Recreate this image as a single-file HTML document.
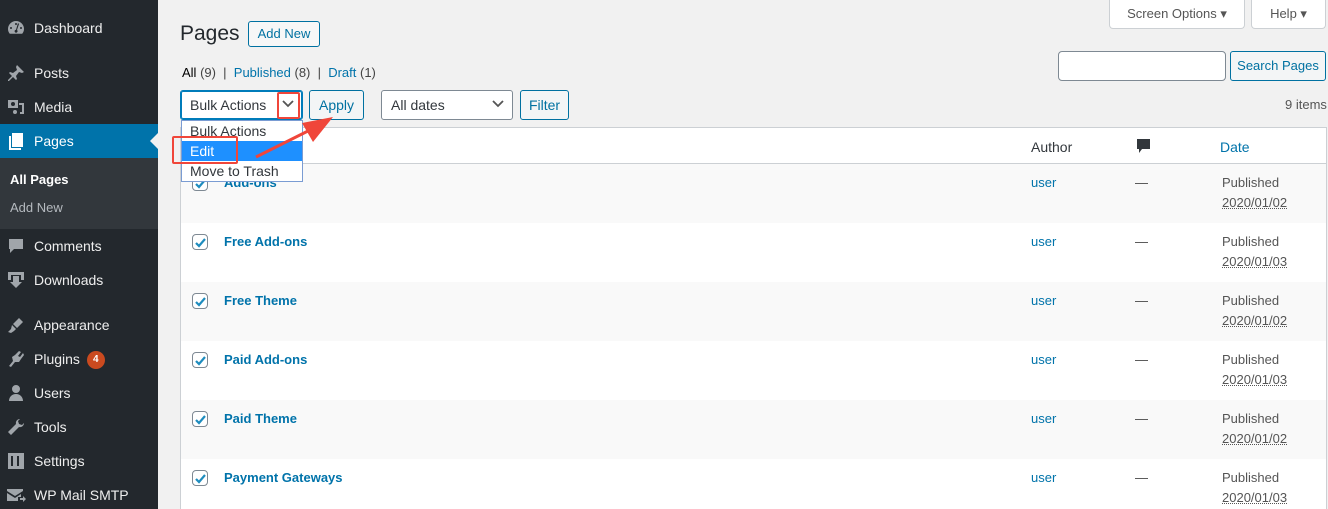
<!DOCTYPE html>
<html><head><meta charset="utf-8">
<style>
*{box-sizing:border-box;margin:0;padding:0}
html,body{width:1328px;height:509px;overflow:hidden}
body{background:#f1f1f1;font-family:"Liberation Sans",sans-serif;font-size:13px;color:#444;position:relative}
.abs{position:absolute}
#side{left:0;top:0;width:158px;height:509px;background:#23282d}
.mi{position:absolute;left:0;width:158px;height:34px;color:#eee;font-size:14px;line-height:34px;padding-left:34px}
.ic{position:absolute;left:6px;top:7px;width:20px;height:20px;fill:#a0a5aa}
.link{color:#0073aa}
.btn{position:absolute;border:1px solid #0071a1;border-radius:3px;background:#f3f5f6;color:#0071a1;font-size:13px;text-align:center}
.row{position:absolute;left:181px;width:1145px;height:59px}
.cb{position:absolute;left:11px;top:11px;width:16px;height:16px;border:1px solid #7e8993;border-radius:4px;background:#fff}
.cb svg{position:absolute;left:1px;top:1px}
.title{position:absolute;left:43px;top:11px;color:#0073aa;font-weight:bold;font-size:13px}
.au{position:absolute;left:850px;top:11px;color:#0073aa}
.dash{position:absolute;left:954px;top:11px}
.dt{position:absolute;left:1041px;top:9px;line-height:20px;color:#555}
.dt u{text-decoration:underline dotted;text-decoration-thickness:1px}
</style></head><body>
<div id="side" class="abs">
 <div class="mi" style="top:11px"><svg class="ic" viewBox="0 0 20 20"><path d="M10 3a8 8 0 0 0-8 8c0 2 .7 3.5 1.8 4.8h12.4A8 8 0 0 0 18 11a8 8 0 0 0-8-8zm0 2a1 1 0 1 1 0 2 1 1 0 0 1 0-2zM5 9a1 1 0 1 1 0 2 1 1 0 0 1 0-2zm10 0a1 1 0 1 1 0 2 1 1 0 0 1 0-2zm-2-3l-2 6a1.5 1.5 0 1 1-1-.3L12 5z"/></svg>Dashboard</div>
 <div class="mi" style="top:56px"><svg class="ic" viewBox="0 0 20 20"><path d="M11 2l7 7-2 1-3-1-3 4 1 3-1 1-3-3-4 4-1 0 0-1 4-4-3-3 1-1 3 1 4-3-1-3z"/></svg>Posts</div>
 <div class="mi" style="top:90px"><svg class="ic" viewBox="0 0 20 20"><path d="M2 3h10v8H2zM13 6h5v11h-4v-2h2V8h-3zM7 5a2 2 0 1 0 0 4 2 2 0 0 0 0-4zM9 13a2 2 0 1 0 0 4 2 2 0 0 0 0-4z"/></svg>Media</div>
 <div class="mi" style="top:124px;background:#0073aa;color:#fff"><svg class="ic" style="fill:#fff" viewBox="0 0 20 20"><path d="M6 2h11v14H6zM3 5h2v12h10v2H3z"/></svg>Pages</div>
 <div class="abs" style="left:150px;top:133px;width:0;height:0;border-top:8px solid transparent;border-bottom:8px solid transparent;border-right:8px solid #f1f1f1"></div>
 <div class="abs" style="left:0;top:158px;width:158px;height:71px;background:#32373c"></div>
 <div class="abs" style="left:10px;top:172px;color:#fff;font-weight:bold;font-size:13px">All Pages</div>
 <div class="abs" style="left:10px;top:200px;color:#b4b9be;font-size:13px">Add New</div>
 <div class="mi" style="top:229px"><svg class="ic" viewBox="0 0 20 20"><path d="M3 3h14v10H8l-4 4v-4H3z"/></svg>Comments</div>
 <div class="mi" style="top:263px"><svg class="ic" viewBox="0 0 20 20"><path d="M2 2h16v8h-3V5H5v5H2zM7 6h6v6h3l-6 6-6-6h3z"/></svg>Downloads</div>
 <div class="mi" style="top:308px"><svg class="ic" viewBox="0 0 20 20"><path d="M13 3l4 4-6 6-4-4zM6 10l4 4-2 2-3 2-3-1 3-3z"/></svg>Appearance</div>
 <div class="mi" style="top:342px"><svg class="ic" viewBox="0 0 20 20"><path d="M13 2l2 1-3 4 2 1 3-4 1 2-3 4-2 3-4 0-4 5-2-1 4-5-1-4 3-2z"/></svg>Plugins <span style="display:inline-block;width:18px;height:18px;border-radius:9px;background:#ca4a1f;color:#fff;font-size:10px;font-weight:bold;text-align:center;line-height:18px;vertical-align:middle;margin-left:3px">4</span></div>
 <div class="mi" style="top:376px"><svg class="ic" viewBox="0 0 20 20"><path d="M10 2a4 4 0 1 1 0 8 4 4 0 0 1 0-8zM3 18c0-4 3-7 7-7s7 3 7 7z"/></svg>Users</div>
 <div class="mi" style="top:410px"><svg class="ic" viewBox="0 0 20 20"><path d="M14 2a4 4 0 0 0-4 5l-8 8 3 3 8-8a4 4 0 0 0 5-4l-2 2-3-1-1-3z"/></svg>Tools</div>
 <div class="mi" style="top:444px"><svg class="ic" viewBox="0 0 20 20"><path d="M2 2h16v16H2zM5 5v10h2V5zm6 0v10h2V5z" fill-rule="evenodd"/></svg>Settings</div>
 <div class="mi" style="top:478px"><svg class="ic" viewBox="0 0 20 20"><path d="M1 4h16v2l-8 5-8-5zM1 8l8 5 6-4v3h-3v4H1z"/><path d="M14 13h3v-2l3 3-3 3v-2h-3z"/></svg>WP Mail SMTP</div>
</div>

<div class="abs" style="left:180px;top:22px;font-size:21px;color:#23282d">Pages</div>
<div class="btn" style="left:248px;top:21px;width:72px;height:26px;line-height:24px;background:#f7f7f7">Add New</div>
<div class="abs" style="left:182px;top:65px;font-size:13px"><span style="color:#000">All</span> (9) &nbsp;| &nbsp;<span class="link">Published</span> (8) &nbsp;| &nbsp;<span class="link">Draft</span> (1)</div>

<div class="abs" style="left:1109px;top:0;width:136px;height:29px;background:#fff;border:1px solid #ccd0d4;border-top:none;border-radius:0 0 4px 4px;color:#555;text-align:center;line-height:28px">Screen Options ▾</div>
<div class="abs" style="left:1251px;top:0;width:75px;height:29px;background:#fff;border:1px solid #ccd0d4;border-top:none;border-radius:0 0 4px 4px;color:#555;text-align:center;line-height:28px">Help ▾</div>
<div class="abs" style="left:1058px;top:51px;width:168px;height:30px;background:#fff;border:1px solid #7e8993;border-radius:4px"></div>
<div class="btn" style="left:1230px;top:51px;width:96px;height:30px;line-height:28px">Search Pages</div>
<div class="abs" style="left:1285px;top:97px;color:#555">9 items</div>

<div class="abs" style="left:180px;top:90px;width:123px;height:30px;background:#fff;border:1px solid #007cba;border-radius:3px;box-shadow:0 0 0 1px #007cba inset;padding-left:9px;line-height:28px;font-size:14px;color:#32373c">Bulk Actions</div>
<svg class="abs" style="left:281px;top:98px" width="14" height="12"><path d="M2 3l5 5 5-5" stroke="#555" stroke-width="1.8" fill="none"/></svg>
<div class="abs" style="left:277px;top:92px;width:23px;height:27px;border:2px solid #f0463a;border-radius:2px"></div>
<div class="btn" style="left:309px;top:90px;width:55px;height:30px;line-height:28px;font-size:14px">Apply</div>
<div class="abs" style="left:381px;top:90px;width:132px;height:30px;background:#fff;border:1px solid #7e8993;border-radius:3px;padding-left:9px;line-height:28px;font-size:14px;color:#32373c">All dates</div>
<svg class="abs" style="left:491px;top:98px" width="14" height="12"><path d="M2 3l5 5 5-5" stroke="#555" stroke-width="1.8" fill="none"/></svg>
<div class="btn" style="left:520px;top:90px;width:49px;height:30px;line-height:28px;font-size:14px">Filter</div>

<div class="abs" style="left:180px;top:127px;width:1147px;height:390px;background:#fff;border:1px solid #ccd0d4"></div>
<div class="abs" style="left:181px;top:163px;width:1145px;height:1px;background:#ccd0d4"></div>
<div class="abs" style="left:1031px;top:139px;font-size:14px;color:#32373c">Author</div>
<svg class="abs" style="left:1136px;top:138px" width="15" height="16"><path d="M1 1h13v10H6l-3 4v-4H1z" fill="#32373c"/></svg>
<div class="abs" style="left:1220px;top:139px;font-size:14px;color:#0073aa">Date</div>

<div class="row" style="top:164px;background:#f9f9f9"><div class="cb"><svg width="13" height="13"><path d="M2 7l3 3 6-7" stroke="#1e8cbe" stroke-width="2.2" fill="none"/></svg></div><div class="title">Add-ons</div><div class="au">user</div><div class="dash">—</div><div class="dt">Published<br><u>2020/01/02</u></div></div>
<div class="row" style="top:223px;background:#fff"><div class="cb"><svg width="13" height="13"><path d="M2 7l3 3 6-7" stroke="#1e8cbe" stroke-width="2.2" fill="none"/></svg></div><div class="title">Free Add-ons</div><div class="au">user</div><div class="dash">—</div><div class="dt">Published<br><u>2020/01/03</u></div></div>
<div class="row" style="top:282px;background:#f9f9f9"><div class="cb"><svg width="13" height="13"><path d="M2 7l3 3 6-7" stroke="#1e8cbe" stroke-width="2.2" fill="none"/></svg></div><div class="title">Free Theme</div><div class="au">user</div><div class="dash">—</div><div class="dt">Published<br><u>2020/01/02</u></div></div>
<div class="row" style="top:341px;background:#fff"><div class="cb"><svg width="13" height="13"><path d="M2 7l3 3 6-7" stroke="#1e8cbe" stroke-width="2.2" fill="none"/></svg></div><div class="title">Paid Add-ons</div><div class="au">user</div><div class="dash">—</div><div class="dt">Published<br><u>2020/01/03</u></div></div>
<div class="row" style="top:400px;background:#f9f9f9"><div class="cb"><svg width="13" height="13"><path d="M2 7l3 3 6-7" stroke="#1e8cbe" stroke-width="2.2" fill="none"/></svg></div><div class="title">Paid Theme</div><div class="au">user</div><div class="dash">—</div><div class="dt">Published<br><u>2020/01/02</u></div></div>
<div class="row" style="top:459px;background:#fff;height:50px;overflow:hidden"><div class="cb"><svg width="13" height="13"><path d="M2 7l3 3 6-7" stroke="#1e8cbe" stroke-width="2.2" fill="none"/></svg></div><div class="title">Payment Gateways</div><div class="au">user</div><div class="dash">—</div><div class="dt">Published<br><u>2020/01/03</u></div></div>

<div class="abs" style="left:181px;top:120px;width:122px;height:62px;background:#fff;border:1px solid #7a9cd3;font-size:14px;color:#32373c">
 <div style="height:20px;line-height:20px;padding-left:8px">Bulk Actions</div>
 <div style="height:20px;line-height:20px;padding-left:8px;background:#1e90ff;color:#fff">Edit</div>
 <div style="height:20px;line-height:20px;padding-left:8px">Move to Trash</div>
</div>
<div class="abs" style="left:172px;top:136px;width:66px;height:28px;border:2px solid #f0463a;border-radius:2px"></div>
<svg class="abs" style="left:0;top:0" width="1328" height="509"><path d="M256 157L312 129" stroke="#f0463a" stroke-width="3"/><path d="M333 117L302 123L313 142z" fill="#f0463a"/></svg>
</body></html>
